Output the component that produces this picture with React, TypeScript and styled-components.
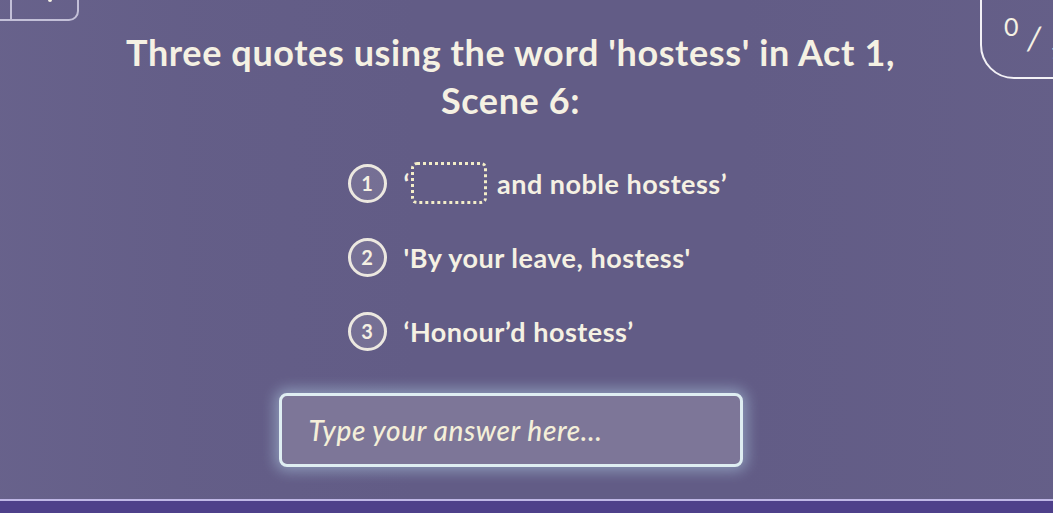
import React from "react";
import styled, { createGlobalStyle } from "styled-components";

const Global = createGlobalStyle`
  html, body { margin: 0; padding: 0; }
  body { font-family: "Lato", "Noto Sans", sans-serif; background: #625c86; }
  * { box-sizing: border-box; }
`;

const Page = styled.div`
  position: relative;
  width: 1053px;
  height: 513px;
  overflow: hidden;
  display: flex;
  flex-direction: column;
  color: #f5f1e3;
  background:
    linear-gradient(90deg, rgba(120, 115, 155, 0.25) 0%, rgba(120, 115, 155, 0.08) 18%, rgba(0, 0, 0, 0) 40%, rgba(0, 0, 0, 0) 70%, rgba(120, 115, 150, 0.12) 100%),
    #625c86;
`;

const CornerTab = styled.div`
  position: absolute;
  top: -2px;
  left: -10px;
  width: 89px;
  height: 23px;
  border: 2px solid rgba(235, 232, 250, 0.7);
  border-bottom-right-radius: 10px;
  display: flex;
`;

const TabDivider = styled.div`
  width: 20px;
  border-right: 2px solid rgba(235, 232, 250, 0.7);
`;

const TabDot = styled.div`
  position: absolute;
  top: -2px;
  left: 48px;
  width: 4px;
  height: 4px;
  border-radius: 50%;
  background: #f5f1e3;
`;

const Counter = styled.div`
  position: absolute;
  top: -4px;
  left: 980px;
  width: 110px;
  height: 83px;
  border: 2.5px solid #f3f1f6;
  border-bottom-left-radius: 34px;
  display: flex;
  align-items: flex-start;
  padding: 16px 0 0 22px;
`;

const CounterValue = styled.span`
  font-size: 25px;
  line-height: 25px;
  font-weight: 400;
`;

const CounterSlash = styled.span`
  font-size: 32px;
  line-height: 32px;
  margin: 8px 0 0 8px;
  transform: skewX(-6deg);
`;

const CounterTotal = styled.span`
  font-size: 19px;
  line-height: 19px;
  font-weight: 700;
  margin: 28px 0 0 10px;
`;

const Main = styled.main`
  flex: 1;
  display: flex;
  flex-direction: column;
  align-items: center;
  padding: 28px 32px 0 0;
`;

const Heading = styled.h1`
  margin: 0;
  font-size: 36px;
  line-height: 48px;
  font-weight: 700;
  letter-spacing: 0.6px;
  text-align: center;
  white-space: nowrap;
`;

const QuoteList = styled.ol`
  list-style: none;
  margin: 39px 0 0;
  padding: 0 0 0 69px;
  width: 464px;
  display: flex;
  flex-direction: column;
  gap: 34px;
`;

const QuoteRow = styled.li`
  display: flex;
  align-items: center;
  height: 40px;
  gap: 17px;
  font-size: 27px;
  font-weight: 700;
  white-space: nowrap;
`;

const NumberBadge = styled.span`
  flex: none;
  width: 39px;
  height: 39px;
  border-radius: 50%;
  border: 3px solid #ece8e0;
  background: rgba(255, 255, 255, 0.12);
  display: flex;
  align-items: center;
  justify-content: center;
  font-size: 20px;
  font-weight: 700;
`;

const QuoteText = styled.span`
  display: flex;
  align-items: center;
  letter-spacing: 0.5px;
`;

const Blank = styled.span`
  display: inline-block;
  width: 76px;
  height: 42px;
  margin: 0 10px 0 1px;
  border: 3px dotted #f3edc8;
  border-radius: 6px;
`;

const AnswerBox = styled.div`
  margin-top: 42px;
  width: 464px;
  height: 74px;
  border: 3px solid #dfeef2;
  border-radius: 8px;
  background: #7d7698;
  box-shadow: 0 0 14px 4px rgba(190, 225, 245, 0.45);
  display: flex;
  align-items: center;
  padding: 0 27px;
`;

const Placeholder = styled.span`
  font-size: 28px;
  font-style: italic;
  font-weight: 500;
  letter-spacing: 0.6px;
  color: #f4efd9;
`;

const Footer = styled.div`
  flex: none;
  height: 14px;
  border-top: 2px solid #bfb7e6;
  background: #4e408a;
`;

export default function App() {
  return (
    <Page>
      <Global />
      <CornerTab>
        <TabDivider />
      </CornerTab>
      <TabDot />
      <Counter>
        <CounterValue>0</CounterValue>
        <CounterSlash>/</CounterSlash>
        <CounterTotal>1</CounterTotal>
      </Counter>
      <Main>
        <Heading>
          Three quotes using the word 'hostess' in Act 1,
          <br />
          Scene 6:
        </Heading>
        <QuoteList>
          <QuoteRow>
            <NumberBadge>1</NumberBadge>
            <QuoteText>
              ‘<Blank />and noble hostess’
            </QuoteText>
          </QuoteRow>
          <QuoteRow>
            <NumberBadge>2</NumberBadge>
            <QuoteText>'By your leave, hostess'</QuoteText>
          </QuoteRow>
          <QuoteRow>
            <NumberBadge>3</NumberBadge>
            <QuoteText>‘Honour’d hostess’</QuoteText>
          </QuoteRow>
        </QuoteList>
        <AnswerBox>
          <Placeholder>Type your answer here...</Placeholder>
        </AnswerBox>
      </Main>
      <Footer />
    </Page>
  );
}
